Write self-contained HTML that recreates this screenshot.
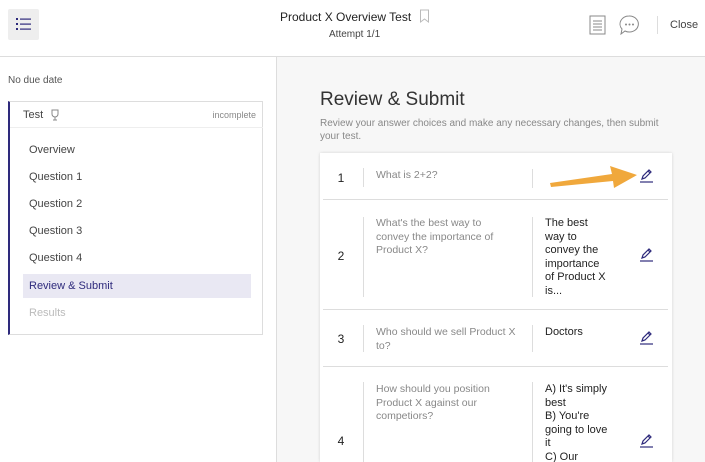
<!DOCTYPE html>
<html style="overflow:hidden;height:462px"><head><style>
*{margin:0;padding:0;box-sizing:border-box}
body{width:705px;height:462px;overflow:hidden;font-family:"Liberation Sans",sans-serif;background:#f7f7f7;position:relative;color:#333}
.abs{position:absolute}
.hdr{left:0;top:0;width:705px;height:57px;background:#fff;border-bottom:1px solid #ddd}
.side{left:0;top:57px;width:277px;height:405px;background:#fff;border-right:1px solid #ddd}
.box{left:8px;top:101px;width:255px;height:234px;border:1px solid #ddd;border-left:2px solid #2e2a7c;background:#fff}
.item{position:absolute;left:19px;font-size:11px;color:#444}
.card{left:320px;top:153px;width:352px;height:309px;background:#fff;box-shadow:0 0 3px rgba(0,0,0,.15);overflow:hidden}
.row{position:absolute;left:3px;width:345px;border-bottom:1px solid #ddd}
.num{position:absolute;left:14px;width:8px;text-align:center;font-size:12px;color:#222}
.vl{position:absolute;width:1px;background:#ddd}
.q{position:absolute;left:53px;font-size:10.5px;color:#888;line-height:13.5px}
.a{position:absolute;left:222px;font-size:11px;color:#222;line-height:13.5px}
</style></head><body>
<div class="abs hdr"></div>
<div class="abs" style="left:8px;top:9px;width:31px;height:31px;background:#eee;border-radius:2px"></div>
<svg class="abs" style="left:16px;top:17px" width="15" height="14" viewBox="0 0 15 14"><g fill="#2e2a7c"><rect x="0" y="1" width="2" height="2"/><rect x="0" y="6" width="2" height="2"/><rect x="0" y="11" width="2" height="2"/><rect x="4" y="1.5" width="11" height="1.2"/><rect x="4" y="6.5" width="11" height="1.2"/><rect x="4" y="11.5" width="11" height="1.2"/></g></svg>
<div class="abs" style="left:280px;top:10px;font-size:12px;color:#222">Product X Overview Test</div>
<svg class="abs" style="left:419px;top:9px" width="11" height="14"><path d="M1.5 1h8v12l-4-3-4 3z" fill="none" stroke="#bbb"/></svg>
<div class="abs" style="left:329px;top:29px;font-size:10px;color:#444">Attempt 1/1</div>
<svg class="abs" style="left:589px;top:15px" width="18" height="20"><rect x="1" y="1" width="15" height="18" fill="none" stroke="#888"/><path d="M4 6h9M4 9h9M4 12h9M4 15h9" stroke="#888"/></svg>
<svg class="abs" style="left:619px;top:15px" width="21" height="20"><path d="M10 1a9 8 0 1 1-4 15l-4 3 1-5A9 8 0 0 1 10 1z" fill="none" stroke="#888"/><circle cx="7" cy="9.5" r="1" fill="#888"/><circle cx="10.5" cy="9.5" r="1" fill="#888"/><circle cx="14" cy="9.5" r="1" fill="#888"/></svg>
<div class="abs" style="left:657px;top:16px;width:1px;height:18px;background:#ddd"></div>
<div class="abs" style="left:670px;top:19px;font-size:11px;color:#444">Close</div>

<div class="abs side"></div>
<div class="abs" style="left:8px;top:75px;font-size:10px;color:#555">No due date</div>
<div class="abs box">
<div style="position:absolute;left:0;top:0;width:253px;height:26px;border-bottom:1px solid #eee"></div>
<div style="position:absolute;left:13px;top:7px;font-size:11px;color:#444">Test</div>
<svg style="position:absolute;left:40px;top:7px" width="10" height="12"><path d="M2 1h6v4a3 3 0 0 1-6 0zM5 8v3M3 11h4" fill="none" stroke="#888"/></svg>
<div style="position:absolute;right:6px;top:8px;font-size:9px;color:#888">incomplete</div>
<div class="item" style="top:42px">Overview</div>
<div class="item" style="top:69px">Question 1</div>
<div class="item" style="top:96px">Question 2</div>
<div class="item" style="top:123px">Question 3</div>
<div class="item" style="top:150px">Question 4</div>
<div style="position:absolute;left:13px;top:172px;width:228px;height:24px;background:#e9e8f3"></div>
<div class="item" style="top:178px;color:#2e2a7c">Review &amp; Submit</div>
<div class="item" style="top:205px;color:#bbb">Results</div>
</div>

<div class="abs" style="left:320px;top:89px;font-size:19px;color:#333">Review &amp; Submit</div>
<div class="abs" style="left:320px;top:117px;width:360px;font-size:10px;color:#888;line-height:13px">Review your answer choices and make any necessary changes, then submit your test.</div>

<div class="abs card">
<div class="row" style="top:0;height:47px">
<div class="num" style="top:18px">1</div>
<div class="vl" style="left:40px;top:15px;height:19px"></div>
<div class="q" style="top:16px">What is 2+2?</div>
<div class="vl" style="left:209px;top:16px;height:19px"></div>
</div>
<div class="row" style="top:47px;height:110px">
<div class="num" style="top:49px">2</div>
<div class="vl" style="left:40px;top:17px;height:80px"></div>
<div class="q" style="top:17px">What's the best way to<br>convey the importance of<br>Product X?</div>
<div class="vl" style="left:209px;top:17px;height:80px"></div>
<div class="a" style="top:17px">The best<br>way to<br>convey the<br>importance<br>of Product X<br>is...</div>
</div>
<div class="row" style="top:157px;height:57px">
<div class="num" style="top:22px">3</div>
<div class="vl" style="left:40px;top:15px;height:27px"></div>
<div class="q" style="top:16px">Who should we sell Product X<br>to?</div>
<div class="vl" style="left:209px;top:15px;height:27px"></div>
<div class="a" style="top:16px">Doctors</div>
</div>
<div class="row" style="top:214px;height:95px;border:none">
<div class="num" style="top:67px">4</div>
<div class="vl" style="left:40px;top:15px;height:80px"></div>
<div class="q" style="top:16px">How should you position<br>Product X against our<br>competiors?</div>
<div class="vl" style="left:209px;top:15px;height:80px"></div>
<div class="a" style="top:16px;height:79px;overflow:hidden">A) It's simply<br>best<br>B) You're<br>going to love<br>it<br>C) Our</div>
</div>
</div>
<svg width="0" height="0" style="position:absolute"><defs><g id="pen"><path d="M3 11l1-3 6-6 2 2-6 6z M9 3l2 2" fill="none" stroke="#2e2a7c" stroke-width="1.2"/><path d="M1 14h13" stroke="#2e2a7c" stroke-width="1.2"/></g></defs></svg>
<svg class="abs" style="left:639px;top:168px" width="15" height="15"><use href="#pen"/></svg>
<svg class="abs" style="left:639px;top:247px" width="15" height="15"><use href="#pen"/></svg>
<svg class="abs" style="left:639px;top:330px" width="15" height="15"><use href="#pen"/></svg>
<svg class="abs" style="left:639px;top:433px" width="15" height="15"><use href="#pen"/></svg>
<svg class="abs" style="left:548px;top:163px" width="92" height="28"><path d="M2 20L64 11L62 3L89 12L66 25L65 18L3 24z" fill="#f0a83c"/></svg>
</body></html>
